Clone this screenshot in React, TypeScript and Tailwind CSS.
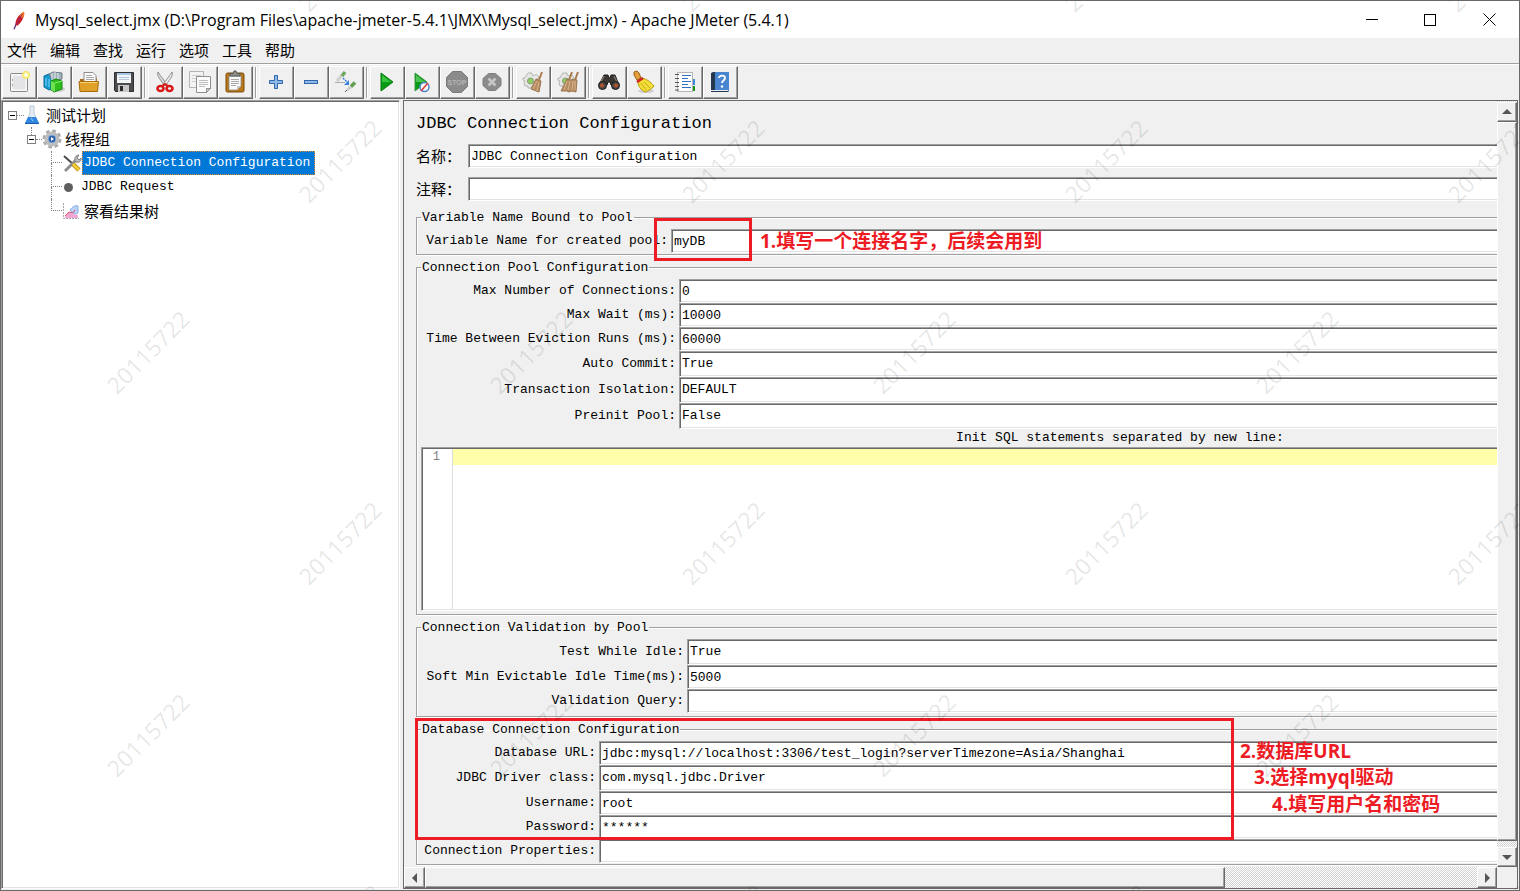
import { ReactNode } from "react";

const mono = "font-['Liberation_Mono','Noto_Sans_CJK_SC',monospace]";
const cjk = "font-['Noto_Sans_CJK_SC',sans-serif] text-[15px]";

const raised =
  "bg-[#f0f0f0] border border-t-white border-l-white border-r-[#696969] border-b-[#696969] shadow-[inset_-1px_-1px_0_#a0a0a0]";

const sunken =
  "bg-white border border-t-[#a0a0a0] border-l-[#a0a0a0] border-r-white border-b-white shadow-[inset_1px_1px_0_#696969,inset_-1px_-1px_0_#e3e3e3]";

const checker =
  "bg-[conic-gradient(#ffffff_25%,#d2d2d2_0_50%,#ffffff_0_75%,#d2d2d2_0)] bg-[length:2px_2px]";

function Svg({ children, size = 24 }: { children: ReactNode; size?: number }) {
  return (
    <svg width={size} height={size} viewBox="0 0 24 24" fill="none" className="shrink-0">
      {children}
    </svg>
  );
}

const NewIcon = () => (
  <Svg>
    <rect x="3.5" y="3.5" width="17" height="18" rx="1" fill="#ececec" stroke="#8a8a8a" />
    <rect x="5" y="5" width="14" height="15" fill="#e4e4e6" stroke="#fff" />
    <path d="M5.5 9v2M5.5 14v2" stroke="#aaa" />
    <circle cx="19" cy="5" r="3.5" fill="#fdf6a0" stroke="#f1e04c" />
    <circle cx="19" cy="5" r="1.5" fill="#fff" />
  </Svg>
);

const TemplatesIcon = () => (
  <Svg>
    <ellipse cx="16" cy="19" rx="7" ry="3" fill="#c9c9c9" />
    <path d="M2 6l5-2 4 1v14l-4 1-5-3z" fill="#159ad0" stroke="#0b6a9c" />
    <path d="M7 4l4-2 9 1v6l-9 3z" fill="#9fb2ba" stroke="#6c7c84" />
    <path d="M10 3v7M13 2v7M16 3v6" stroke="#e4eaec" />
    <path d="M4 8v8M7 9v8" stroke="#7fd3f3" />
    <path d="M9 11l5-2 6 2v8l-8 3-3-2z" fill="#2fbd1c" stroke="#168a0c" />
    <path d="M9 11l4 2v9l-4-2z" fill="#6fe052" />
    <path d="M13 13l7-2" stroke="#8cf070" />
  </Svg>
);

const OpenIcon = () => (
  <Svg>
    <path d="M3 9h4l1-1h12v12H3z" fill="#a86d12" />
    <path d="M7 2.500h9l3 3V14H7z" fill="#fafafa" stroke="#8d8d8d" />
    <path d="M9 5.500h6M9 7.500h8M9 9.500h8" stroke="#a9a9a9" />
    <path d="M2 11.500h19.500l-1 10H3z" fill="#e0a129" stroke="#a86b0c" />
    <path d="M3 12.500h17.500" stroke="#f7d277" />
  </Svg>
);

const SaveIcon = () => (
  <Svg>
    <path d="M2.500 2.500h19v19h-18l-1-1z" fill="#4c4c4f" stroke="#2e2e30" />
    <rect x="5" y="3" width="14" height="10" fill="#f3f6f9" />
    <rect x="5" y="3" width="14" height="2" fill="#a9c4e4" />
    <path d="M7 7.500h10M7 9.500h10" stroke="#b4c6d8" />
    <rect x="6" y="15" width="11" height="7" fill="#c8c8ca" />
    <rect x="8" y="16" width="3" height="5" fill="#2b2b2d" />
  </Svg>
);

const CutIcon = () => (
  <Svg>
    <path d="M5 2c-1 3 0 5 7 14l2-2C9 8 7 5 5 2z" fill="#d9dada" stroke="#8a8c8c" />
    <path d="M19 2c1 3 0 5-7 14l-2-2c5-6 7-9 9-12z" fill="#eef0f0" stroke="#8a8c8c" />
    <ellipse cx="7.500" cy="18.500" rx="3" ry="2.500" stroke="#d61a1a" strokeWidth="2.600" />
    <ellipse cx="16.500" cy="18.500" rx="3" ry="2.500" stroke="#d61a1a" strokeWidth="2.600" />
    <path d="M9 16l3-2 3 2" stroke="#d61a1a" strokeWidth="2" />
  </Svg>
);

const CopyIcon = () => (
  <Svg>
    <path d="M1.500 1.500h14v16h-14z" fill="#f3f3f3" stroke="#b4b4b4" />
    <path d="M4 5.500h9M4 8.500h5M4 11.500h5" stroke="#cfcfcf" />
    <path d="M8.500 6.500h14v12l-4 4h-10z" fill="#fbfbfb" stroke="#8f8f8f" />
    <path d="M11 10.500h9M11 12.500h9M11 14.500h9M11 16.500h6" stroke="#bdbdbd" />
    <path d="M22.500 18.500h-4v4z" fill="#cfcfcf" stroke="#8f8f8f" />
  </Svg>
);

const PasteIcon = () => (
  <Svg>
    <rect x="3" y="3" width="18" height="19" rx="1.500" fill="#b8771a" stroke="#7a4a08" />
    <path d="M6 6h12v10l-4 4H6z" fill="#fafafa" stroke="#8c8c8c" strokeWidth=".8" />
    <path d="M8 9.500h8M8 11.500h8M8 13.500h8M8 15.500h5" stroke="#a8a8a8" />
    <path d="M18 16h-4v4z" fill="#c9c9c9" />
    <path d="M7 6V3.500h3L11 1h2l1 2.500h3V6z" fill="#8d8f8a" stroke="#555753" />
  </Svg>
);

const PlusIcon = () => (
  <Svg>
    <path d="M10.500 5.500h3v5h5v3h-5v5h-3v-5h-5v-3h5z" fill="#8fb8e6" stroke="#2f66ad" />
  </Svg>
);

const MinusIcon = () => (
  <Svg>
    <rect x="5.500" y="10.500" width="13" height="3" fill="#8fb8e6" stroke="#2f66ad" />
  </Svg>
);

const ToggleIcon = () => (
  <Svg>
    <path d="M3 11l5-6" stroke="#cdd1cd" strokeWidth="3" />
    <path d="M8 6l3-4" stroke="#6ea75f" strokeWidth="3.500" />
    <path d="M2 12l-1 1M2 12.500h9" stroke="#9b9b9b" strokeWidth=".8" />
    <path d="M9 8l4 4" stroke="#3b7de0" strokeWidth="1.500" strokeDasharray="2 1" />
    <path d="M15 10v5h-5z" fill="#3b7de0" />
    <path d="M13 20l5-4" stroke="#cdd1cd" strokeWidth="3" />
    <path d="M17 16.500l4-4" stroke="#63a052" strokeWidth="3.500" />
    <path d="M11 22l2-2" stroke="#555" />
  </Svg>
);

const StartIcon = () => (
  <Svg>
    <path d="M6 3v18l12-9z" fill="#0a9a16" stroke="#08780f" />
    <path d="M7 5v7h9z" fill="#37c43f" />
  </Svg>
);

const StartNoPauseIcon = () => (
  <Svg>
    <path d="M5 3v18l12-9z" fill="#0a9a16" stroke="#3f9a46" />
    <path d="M6 5v7h9z" fill="#4cc454" />
    <circle cx="14.500" cy="17" r="4.500" fill="#f4f8fd" stroke="#4c86c8" strokeWidth="1.500" />
    <path d="M11 21l7-8" stroke="#d8443c" strokeWidth="1.600" />
  </Svg>
);

const StopIcon = () => (
  <Svg>
    <path d="M7.500 1.500h9l6 6v9l-6 6h-9l-6-6v-9z" fill="#8b8b8b" stroke="#7b7b7b" />
    <text x="12" y="15" textAnchor="middle" fontSize="7" fontWeight="700" fontFamily="Liberation Sans" fill="#b4b4b4">
      STOP
    </text>
  </Svg>
);

const ShutdownIcon = () => (
  <Svg>
    <path d="M8.500 3.500h7l5.500 5v7l-5.500 5h-7l-5.500-5v-7z" fill="#8b8b8b" stroke="#7f7f7f" />
    <path d="M8.500 8.500l7 7M15.500 8.500l-7 7" stroke="#c6c6c6" strokeWidth="2.600" />
  </Svg>
);

const Gear = () => (
  <>
    <path
      d="M7 3h4v2l2 1 2-2 3 3-2 2v6l-2 2-3-1v2H7v-2l-3 0-1-3 1-2-2-1V8l2 0 1-2z"
      fill="#e6e6e4"
      stroke="#b5b5b2"
    />
    <circle cx="9.500" cy="11" r="3" fill="#8bd05a" stroke="#8a9a80" />
  </>
);

const ClearIcon = () => (
  <Svg>
    <Gear />
    <path d="M21 2l-3 8" stroke="#a8794a" strokeWidth="2" />
    <path d="M15 9l5 2-2 11-8-3z" fill="#b58b62" stroke="#9b7850" />
    <path d="M16 11l-4 8M18 12l-2 9" stroke="#d8b890" />
  </Svg>
);

const ClearAllIcon = () => (
  <Svg>
    <Gear />
    <path d="M16 2l-3 8M22 2l-3 8" stroke="#a8794a" strokeWidth="2" />
    <path d="M11 9l4 1 3-1 3 1-1 12-4-1-3 1-2-1-6 0z" fill="#b58b62" stroke="#9b7850" />
    <path d="M11 11l-3 9M14 11l-2 9M17 11l-1 9M19 11v9" stroke="#d8b890" />
  </Svg>
);

const SearchIcon = () => (
  <Svg>
    <path d="M7 5h4l1 3h1l1-3h4l4 10h-8l-1-3h-2l-1 3H2z" fill="#3a3632" stroke="#1d1a18" />
    <path d="M7 6l-3 6M17 6l3 6" stroke="#7a746e" strokeWidth="1.500" />
    <circle cx="5.500" cy="15.500" r="4" fill="#4a4541" stroke="#1d1a18" />
    <circle cx="18.500" cy="15.500" r="4" fill="#4a4541" stroke="#1d1a18" />
    <circle cx="5" cy="15.500" r="2" fill="#b4532c" />
    <circle cx="19" cy="15.500" r="2" fill="#b4532c" />
  </Svg>
);

const BroomIcon = () => (
  <Svg>
    <ellipse cx="14" cy="21" rx="8" ry="2" fill="#cfcfcf" />
    <path d="M2 2l3-1 2 2 2 5-4 2-3-5z" fill="#e2a13c" stroke="#9a6413" />
    <path d="M10 8c4 1 8 3 12 8-2 3-6 5-9 6-4-2-7-6-7-10z" fill="#f3dd37" stroke="#b79b10" />
    <path d="M9 13l5 7M12 12l6 6" stroke="#c9ab18" />
    <path d="M5 12l6-4" stroke="#d32020" strokeWidth="2.600" />
  </Svg>
);

const LogIcon = () => (
  <Svg>
    <rect x="4.500" y="2.500" width="15" height="19" fill="#fdfdfd" stroke="#b5b5b5" />
    <path d="M2 4.500h4M2 8.500h4M2 12.500h4M2 16.500h4M2 20h4" stroke="#555" strokeWidth="1.200" />
    <path d="M9 5.500h9M9 8.500h6M9 11.500h9M9 14.500h6M9 17.500h9" stroke="#2f6fc4" strokeWidth="1.200" />
    <rect x="20" y="9" width="2" height="6" fill="#3f88e0" />
    <rect x="20" y="16" width="2" height="5" fill="#17901c" />
  </Svg>
);

const HelpIcon = () => (
  <Svg>
    <path d="M3 3l2-1h16v19l-1 1H3z" fill="#26384f" />
    <rect x="7" y="2" width="14" height="19" fill="#4a86d0" />
    <path d="M3 20.500h17" stroke="#e8eef5" />
    <path d="M11 8c0-3 6-3.500 6 0 0 2.500-3 2.500-3 5" stroke="#fff" strokeWidth="1.800" />
    <circle cx="14" cy="16.500" r="1.200" fill="#fff" />
  </Svg>
);

const FeatherIcon = () => (
  <Svg size={20}>
    <path d="M6 23l3-7" stroke="#5a2a7a" strokeWidth="1.500" />
    <path d="M8 18c-1-6 3-12 10-16 1 5-2 12-8 17z" fill="#c8202f" />
    <path d="M13 7c1-3 3-4 5-5 1 3 0 6-2 8z" fill="#ef7a2c" />
    <path d="M9 17l7-12" stroke="#8f1f63" />
  </Svg>
);

const FlaskIcon = () => (
  <svg width="16" height="20" viewBox="0 0 16 20" fill="none">
    <path d="M6 1h4v7l4 10H2L6 8z" fill="#e4edf5" stroke="#b9c8d5" />
    <path d="M4 12h8l3 6H1z" fill="#2f87e2" />
    <path d="M1 18.500h14" stroke="#1c57a8" />
    <path d="M7 13l2 3" stroke="#a5d0fb" />
  </svg>
);

const GroupIcon = () => (
  <svg width="20" height="20" viewBox="0 0 20 20" fill="none">
    <circle cx="10" cy="10" r="8" stroke="#a9a9a9" strokeWidth="3" strokeDasharray="3.600 2.683" />
    <circle cx="10" cy="10" r="6" fill="#d8d8d8" stroke="#bdbdbd" strokeWidth="3" />
    <circle cx="10" cy="10" r="4" fill="#2f62a8" stroke="#8fb0dc" />
    <path d="M9 8v4l3-2z" fill="#fff" />
  </svg>
);

const ToolsIcon = () => (
  <svg width="20" height="20" viewBox="0 0 20 20" fill="none">
    <path d="M2 3l10 9" stroke="#4a4a4a" strokeWidth="2" />
    <path d="M3 18L14 7" stroke="#8e8e8e" strokeWidth="3" />
    <path d="M13 8c-1-3 1-6 4-6l-2 3 2 2 2-2c1 3-2 5-5 4z" fill="#bcbcbc" stroke="#7f7f7f" />
    <path d="M11 11l6 6" stroke="#b88a0e" strokeWidth="4.500" />
    <path d="M11 11l6 6" stroke="#f5cf3a" strokeWidth="2.500" />
  </svg>
);

const ResultIcon = () => (
  <svg width="18" height="18" viewBox="0 0 18 18" fill="none">
    <path d="M1.500 1v15.500H17" stroke="#a6a6a6" strokeDasharray="2 1" />
    <path d="M8 8c2-3 5-5 8-4v7c-2 2-5 1-6-1z" fill="#b9d2f6" stroke="#86aee6" />
    <path d="M3 15l4-5 4 2 5 1v3H3z" fill="#f3a6d4" />
    <path d="M3 14l4-4 4 1 2-3" stroke="#dd4a6a" />
  </svg>
);

const toolGroups = [
  [
    { name: "新建", icon: <NewIcon /> },
    { name: "模板", icon: <TemplatesIcon /> },
    { name: "打开", icon: <OpenIcon /> },
    { name: "保存", icon: <SaveIcon /> },
  ],
  [
    { name: "剪切", icon: <CutIcon /> },
    { name: "复制", icon: <CopyIcon /> },
    { name: "粘贴", icon: <PasteIcon /> },
  ],
  [
    { name: "展开", icon: <PlusIcon /> },
    { name: "折叠", icon: <MinusIcon /> },
    { name: "切换", icon: <ToggleIcon /> },
  ],
  [
    { name: "启动", icon: <StartIcon /> },
    { name: "不停顿启动", icon: <StartNoPauseIcon /> },
    { name: "停止", icon: <StopIcon /> },
    { name: "关闭", icon: <ShutdownIcon /> },
  ],
  [
    { name: "清除", icon: <ClearIcon /> },
    { name: "清除全部", icon: <ClearAllIcon /> },
  ],
  [
    { name: "搜索", icon: <SearchIcon /> },
    { name: "重置搜索", icon: <BroomIcon /> },
  ],
  [
    { name: "函数助手", icon: <LogIcon /> },
    { name: "帮助", icon: <HelpIcon /> },
  ],
];

const menus = ["文件", "编辑", "查找", "运行", "选项", "工具", "帮助"];

type RowProps = {
  id: string;
  label: string;
  value: string;
  combo?: boolean;
};

// label + control, meant to sit in a two column grid
function Row({ id, label, value, combo }: RowProps) {
  return (
    <>
      <label htmlFor={id} className="self-center pr-[3px] text-right whitespace-pre">
        {label}
      </label>
      {combo ? (
        <select id={id} defaultValue={value} className={`${sunken} h-[26px] w-full appearance-none rounded-none pl-[2px] outline-none`}>
          <option>{value}</option>
        </select>
      ) : (
        <input id={id} defaultValue={value} className={`${sunken} h-6 w-full pl-[2px] outline-none`} />
      )}
    </>
  );
}

function Group({ title, className = "", children }: { title: string; className?: string; children: ReactNode }) {
  return (
    <fieldset
      className={`min-w-0 border border-[#a0a0a0] px-[3px] pt-1 pb-px shadow-[inset_1px_1px_0_#ffffff,1px_1px_0_#ffffff] ${className}`}
    >
      <legend className="ml-px h-4 px-px leading-[18px]">{title}</legend>
      {children}
    </fieldset>
  );
}

function Note({ className, children }: { className: string; children: ReactNode }) {
  return (
    <p
      className={`absolute font-['Open_Sans','Noto_Sans_CJK_SC',sans-serif] text-[19px] leading-7 font-bold whitespace-nowrap text-[#ed1c24] ${className}`}
    >
      {children}
    </p>
  );
}

function Expander() {
  return (
    <button aria-label="折叠" className="flex size-[9px] items-center justify-center border border-[#808080] bg-white">
      <span className="h-px w-[5px] bg-black" />
    </button>
  );
}

function Branch({ last }: { last?: boolean }) {
  return (
    <span className="flex h-6 w-[11px] flex-col">
      <span className="h-3 border-b border-l border-dotted border-[#808080]" />
      {!last && <span className="h-3 border-l border-dotted border-[#808080]" />}
    </span>
  );
}

function Tree() {
  return (
    <ul className="leading-6 text-black">
      <li className="flex h-6 items-center pl-[5px]">
        <Expander />
        <span className="w-[7px] border-t border-dotted border-[#808080]" />
        <FlaskIcon />
        <span className={`pl-[6px] ${cjk}`}>测试计划</span>
      </li>
      <li className="flex h-6 items-center pl-6">
        <span className="flex h-6 flex-col items-center">
          <span className="h-2 border-l border-dotted border-[#808080]" />
          <Expander />
        </span>
        <span className="w-[6px] border-t border-dotted border-[#808080]" />
        <GroupIcon />
        <span className={`pl-[3px] ${cjk}`}>线程组</span>
      </li>
      <li className="flex h-6 items-center pl-12">
        <Branch />
        <ToolsIcon />
        <span className="h-6 border border-dotted border-[#e08a30] bg-[#0078d7] pr-1 pl-px leading-[22px] text-white">
          JDBC Connection Configuration
        </span>
      </li>
      <li className="flex h-6 items-center pl-12">
        <Branch />
        <span className="ml-[2px] size-[9px] rounded-full bg-[#5f5f5f]" />
        <span className="pl-2">JDBC Request</span>
      </li>
      <li className="flex h-6 items-center pl-12">
        <Branch last />
        <ResultIcon />
        <span className={`pl-1 ${cjk}`}>察看结果树</span>
      </li>
    </ul>
  );
}

function ConfigForm() {
  return (
    <div className="flex h-full w-[131%] flex-col px-3 pt-[9px] pb-[2px]">
      <h1 className="text-[17px] leading-7">JDBC Connection Configuration</h1>
      <div className="mt-[6px] mb-2 grid grid-cols-[52px_1fr] gap-y-[9px]">
        <label htmlFor="name" className={`self-center leading-6 ${cjk}`}>
          名称：
        </label>
        <input id="name" defaultValue="JDBC Connection Configuration" className={`${sunken} h-6 w-full pl-[2px] outline-none`} />
        <label htmlFor="comment" className={`self-center leading-6 ${cjk}`}>
          注释：
        </label>
        <input id="comment" className={`${sunken} h-6 w-full pl-[2px] outline-none`} />
      </div>

      <div className="flex min-h-0 flex-1 flex-col gap-1">
        <div className="relative">
          <Group title="Variable Name Bound to Pool">
            <div className="grid grid-cols-[251px_1fr]">
              <Row id="pool" label="Variable Name for created pool:" value="myDB" />
            </div>
          </Group>
          <div className="pointer-events-none absolute top-[9px] left-[238px] h-[43px] w-[98px] border-3 border-[#ed1c24]" />
          <Note className="top-[18px] left-[344px]">1.填写一个连接名字，后续会用到</Note>
        </div>

        <Group title="Connection Pool Configuration" className="flex min-h-0 flex-1 flex-col">
          <div className="flex h-full flex-col pb-[2px]">
            <div className="grid grid-cols-[259px_1fr]">
              <Row id="max" label="Max Number of Connections:" value="0" />
              <Row id="wait" label="Max Wait (ms):" value="10000" />
              <Row id="eviction" label="Time Between Eviction Runs (ms):" value="60000" />
              <Row id="commit" label="Auto Commit:" value="True" combo />
              <Row id="isolation" label="Transaction Isolation:" value="DEFAULT" combo />
              <Row id="preinit" label="Preinit Pool:" value="False" combo />
            </div>
            <label htmlFor="sql" className="text-center leading-[18px]">
              Init SQL statements separated by new line:
            </label>
            <div className={`${sunken} ml-px flex min-h-0 flex-1 p-px`}>
              <span className="w-[30px] border-r border-[#dddddd] pr-3 text-right text-[12px] leading-4 text-[#808080]">1</span>
              <textarea
                id="sql"
                className="flex-1 resize-none bg-[linear-gradient(#ffffaa,#ffffaa)] bg-[length:100%_16px] bg-no-repeat outline-none"
              />
            </div>
          </div>
        </Group>

        <Group title="Connection Validation by Pool">
          <div className="grid grid-cols-[267px_1fr] pb-[2px]">
            <Row id="idle" label="Test While Idle:" value="True" combo />
            <Row id="evictable" label="Soft Min Evictable Idle Time(ms):" value="5000" />
            <Row id="query" label="Validation Query:" value="" />
          </div>
        </Group>

        <div className="relative">
          <Group title="Database Connection Configuration">
            <div className="grid grid-cols-[179px_1fr]">
              <Row
                id="url"
                label="Database URL:"
                value="jdbc:mysql://localhost:3306/test_login?serverTimezone=Asia/Shanghai"
              />
              <Row id="driver" label="JDBC Driver class:" value="com.mysql.jdbc.Driver" combo />
              <Row id="user" label="Username:" value="root" />
              <Row id="password" label="Password:" value="******" />
              <Row id="props" label="Connection Properties:" value="" />
            </div>
          </Group>
          <div className="pointer-events-none absolute -top-[3px] -left-px h-[122px] w-[819px] border-3 border-[#ed1c24]" />
          <Note className="top-4 left-[824px]">2.数据库URL</Note>
          <Note className="top-[42px] left-[838px]">3.选择myql驱动</Note>
          <Note className="top-[69px] left-[856px]">4.填写用户名和密码</Note>
        </div>
      </div>
    </div>
  );
}

function Arrow({ d }: { d: string }) {
  return (
    <svg width="10" height="10" viewBox="0 0 10 10">
      <path d={d} fill="#555555" />
    </svg>
  );
}

// every other row is shifted by half a step
const marks = [-31, 160, 351, 542, 734, 925].flatMap((y, row) =>
  [0, 1, 2, 3].map((col) => ({
    x: (row === 2 || row === 4 ? 147 : 339) + col * 383,
    y,
  }))
);

function Watermark() {
  return (
    <div aria-hidden="true" className="pointer-events-none absolute inset-0 overflow-hidden font-['Noto_Sans',sans-serif] text-[23px] text-black/10">
      {marks.map((m) => (
        <span
          key={`${m.x}-${m.y}`}
          className="absolute -translate-x-1/2 -translate-y-1/2 -rotate-45"
          style={{ left: m.x, top: m.y }}
        >
          20115722
        </span>
      ))}
    </div>
  );
}

function App() {
  return (
    <div className={`relative flex h-screen flex-col overflow-hidden border border-[#696969] bg-[#f0f0f0] text-[13px] text-black ${mono}`}>
      <header className="flex h-[37px] shrink-0 items-center bg-white pl-2">
        <FeatherIcon />
        <span className="flex-1 pl-[6px] font-['Open_Sans',sans-serif] text-base">
          Mysql_select.jmx (D:\Program Files\apache-jmeter-5.4.1\JMX\Mysql_select.jmx) - Apache JMeter (5.4.1)
        </span>
        <button aria-label="最小化" className="flex h-full w-[58px] items-center justify-center">
          <span className="h-px w-3 bg-black" />
        </button>
        <button aria-label="最大化" className="flex h-full w-[58px] items-center justify-center">
          <span className="size-3 border border-black" />
        </button>
        <button aria-label="关闭" className="flex h-full w-[60px] items-center justify-center">
          <svg width="13" height="13" viewBox="0 0 13 13" stroke="#000">
            <path d="M.5 .5l12 12M12.500 .5l-12 12" />
          </svg>
        </button>
      </header>

      <nav className={`flex h-[26px] shrink-0 items-center gap-[13px] border-b border-[#a0a0a0] pl-[6px] ${cjk}`}>
        {menus.map((menu) => (
          <button key={menu}>{menu}</button>
        ))}
      </nav>

      <div className="flex h-9 shrink-0 items-center border-t border-white pl-px">
        {toolGroups.map((group, i) => (
          <div key={i} className="flex items-center">
            {i > 0 && <span className="mx-[2px] h-[31px] w-[2px] border-r border-l border-r-white border-l-[#a0a0a0]" />}
            {group.map((tool) => (
              <button
                key={tool.name}
                aria-label={tool.name}
                className={`${raised} flex h-[33px] w-[35px] items-center justify-center pr-[2px] pb-px`}
              >
                {tool.icon}
              </button>
            ))}
          </div>
        ))}
      </div>

      <main className="flex min-h-0 flex-1 pb-px">
        <section className={`${sunken} w-[399px] shrink-0 p-px pt-[2px]`}>
          <Tree />
        </section>
        <section className="mr-px ml-[3px] grid min-w-0 flex-1 grid-cols-[1fr_20px] grid-rows-[1fr_21px] border border-[#696969]">
          <div className="min-h-0 min-w-0 overflow-hidden">
            <ConfigForm />
          </div>
          <div className={`flex flex-col pt-px ${checker}`}>
            <button aria-label="向上" className={`${raised} flex h-5 items-center justify-center`}>
              <Arrow d="M0 7h10L5 2z" />
            </button>
            <div className={`${raised} flex-1`} />
            <div className="h-[6px]" />
            <button aria-label="向下" className={`${raised} flex h-5 items-center justify-center`}>
              <Arrow d="M0 3h10L5 8z" />
            </button>
          </div>
          <div className={`flex ${checker}`}>
            <button aria-label="向左" className={`${raised} flex w-[21px] items-center justify-center`}>
              <Arrow d="M7 0v10L2 5z" />
            </button>
            <div className="flex flex-1">
              <div className={`${raised} w-[76%]`} />
            </div>
            <button aria-label="向右" className={`${raised} flex w-5 items-center justify-center`}>
              <Arrow d="M3 0v10l5-5z" />
            </button>
          </div>
          <div className="bg-[#f0f0f0]" />
        </section>
      </main>
      <Watermark />
    </div>
  );
}

export default App;
